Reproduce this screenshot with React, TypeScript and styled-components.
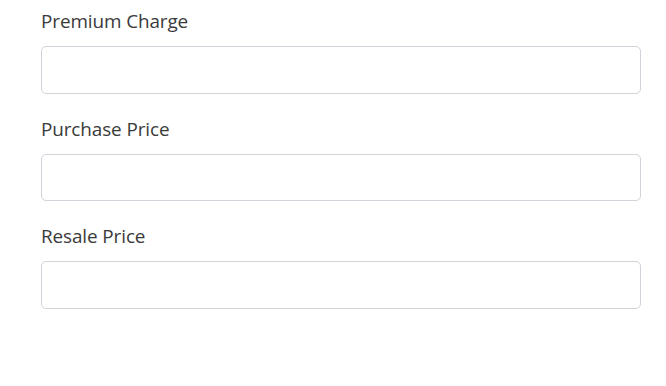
import styled, { createGlobalStyle } from "styled-components";

const GlobalStyle = createGlobalStyle`
  html, body {
    margin: 0;
    padding: 0;
    background: #ffffff;
  }
  body {
    font-family: "Open Sans", "Noto Sans", "Liberation Sans", sans-serif;
    color: #212529;
  }
`;

const Form = styled.form`
  display: flex;
  flex-direction: column;
  gap: 22px;
  padding: 8px 25px 0 41px;
  width: 600px;
`;

const Group = styled.div`
  display: flex;
  flex-direction: column;
  gap: 11px;
`;

const Label = styled.label`
  font-size: 18.9px;
  line-height: 27px;
  color: #3a3a3a;
  letter-spacing: -0.1px;
`;

const Input = styled.input`
  box-sizing: border-box;
  width: 100%;
  height: 47.5px;
  border: 1px solid #ced4da;
  border-radius: 5px;
  padding: 6px 12px;
  font: inherit;
  font-size: 16px;
  outline: none;
  background: #ffffff;
`;

const fields = ["Premium Charge", "Purchase Price", "Resale Price"];

export default function App() {
  return (
    <>
      <GlobalStyle />
      <Form>
        {fields.map((f) => (
          <Group key={f}>
            <Label>{f}</Label>
            <Input type="text" />
          </Group>
        ))}
      </Form>
    </>
  );
}
